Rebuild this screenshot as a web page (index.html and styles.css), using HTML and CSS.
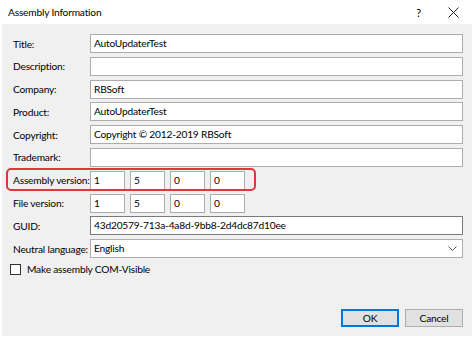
FILE: index.html
```html
<!DOCTYPE html>
<html lang="en">
<head>
    <meta charset="UTF-8">
    <title>Assembly Information</title>
    <link rel="stylesheet" href="styles.css">
</head>
<body>
    <div class="titlebar">
        <span class="title">Assembly Information</span>
        <span class="help">?</span>
        <svg class="close" width="11" height="11" viewBox="0 0 11 11">
            <path d="M0.5 0.5 L10.5 10.5 M10.5 0.5 L0.5 10.5" stroke="#222" stroke-width="1"/>
        </svg>
    </div>
    <div class="dialog">
        <div class="form">
            <label>Title:</label>
            <div class="field">AutoUpdaterTest</div>
            <label>Description:</label>
            <div class="field"></div>
            <label>Company:</label>
            <div class="field">RBSoft</div>
            <label>Product:</label>
            <div class="field">AutoUpdaterTest</div>
            <label>Copyright:</label>
            <div class="field">Copyright © 2012-2019 RBSoft</div>
            <label>Trademark:</label>
            <div class="field"></div>
            <label>Assembly version:</label>
            <div class="version">
                <div class="field">1</div>
                <div class="field">5</div>
                <div class="field">0</div>
                <div class="field">0</div>
            </div>
            <label>File version:</label>
            <div class="version">
                <div class="field">1</div>
                <div class="field">5</div>
                <div class="field">0</div>
                <div class="field">0</div>
            </div>
            <label>GUID:</label>
            <div class="field focused">43d20579-713a-4a8d-9bb8-2d4dc87d10ee</div>
            <label>Neutral language:</label>
            <div class="field combo">
                <span>English</span>
                <svg width="9" height="6" viewBox="0 0 9 6">
                    <path d="M0.5 0.5 L4.5 4.5 L8.5 0.5" fill="none" stroke="#555" stroke-width="1"/>
                </svg>
            </div>
            <div class="highlight"></div>
        </div>
        <div class="check">
            <span class="box"></span>
            <span>Make assembly COM-Visible</span>
        </div>
        <div class="buttons">
            <button class="btn default">OK</button>
            <button class="btn">Cancel</button>
        </div>
    </div>
</body>
</html>
```

FILE: styles.css
```css
body {
    margin: 0;
    width: 474px;
    height: 339px;
    background: #fff;
    font-family: Lato, "Noto Sans", sans-serif;
    font-size: 10.2px;
    letter-spacing: -0.2px;
    color: #000;
    overflow: hidden;
}
.titlebar {
    height: 24px;
    display: flex;
    align-items: center;
    padding-left: 8px;
    background: #fff;
}
.title {
    flex: 1;
}
.help {
    font-size: 11px;
    margin-right: 27px;
}
.close {
    margin-right: 15px;
}
.dialog {
    margin: 0 2px;
    width: 470px;
    height: 312px;
    background: #f0f0f0;
    display: flex;
    flex-direction: column;
}
.form {
    position: relative;
    display: grid;
    grid-template-columns: 77px 1fr;
    grid-auto-rows: 19px;
    row-gap: 3.8px;
    padding: 10px 9px 0 11px;
    align-items: center;
}
.form label {
    white-space: nowrap;
}
.field {
    height: 19px;
    box-sizing: border-box;
    border: 1px solid #adadad;
    background: #fff;
    padding-left: 3px;
    line-height: 17px;
    white-space: nowrap;
    overflow: hidden;
}
.field.focused {
    border-color: #7a7a7a;
}
.version {
    display: flex;
    gap: 5px;
}
.version .field {
    width: 35px;
}
.combo {
    display: flex;
    align-items: center;
    justify-content: space-between;
    padding-right: 5px;
}
.highlight {
    position: absolute;
    left: 4px;
    top: 144px;
    width: 246px;
    height: 19px;
    border: 2px solid #e0353b;
    border-radius: 5px;
}
.check {
    display: flex;
    align-items: center;
    gap: 6px;
    margin: 5px 0 0 8px;
}
.box {
    width: 9px;
    height: 9px;
    border: 1px solid #333;
    background: #fff;
}
.buttons {
    margin-top: auto;
    margin-bottom: 9px;
    display: flex;
    justify-content: flex-end;
    gap: 6px;
    padding-right: 9px;
}
.btn {
    width: 58px;
    height: 18px;
    box-sizing: border-box;
    border: 1px solid #adadad;
    background: #e1e1e1;
    font-family: inherit;
    font-size: 10.2px;
    letter-spacing: -0.2px;
    padding: 0;
}
.btn.default {
    border: 2px solid #0078d7;
}
```
